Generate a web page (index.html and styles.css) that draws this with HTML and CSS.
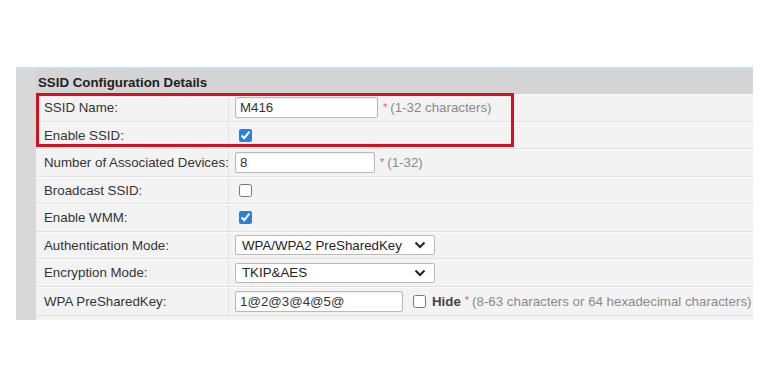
FILE: index.html
```html
<!DOCTYPE html>
<html lang="en">
<head>
  <meta charset="UTF-8" />
  <title>SSID Configuration Details</title>
  <link rel="stylesheet" href="styles.css">
</head>
<body>

<div class="panel">
  <div class="side"></div>
  <div class="content">
    <div class="title">SSID Configuration Details</div>
    <div class="rows">
      <div class="highlight"></div>
      <div class="row">
        <div class="label">SSID Name:</div>
        <div class="value">
          <input class="txt w-name" type="text" value="M416" />
          <span class="req">*</span> <span class="hint">(1-32 characters)</span>
        </div>
      </div>
      <div class="row">
        <div class="label">Enable SSID:</div>
        <div class="value"><input class="chk" type="checkbox" checked /></div>
      </div>
      <div class="row">
        <div class="label">Number of Associated Devices:</div>
        <div class="value">
          <input class="txt w-num" type="text" value="8" />
          <span class="req">*</span> <span class="hint">(1-32)</span>
        </div>
      </div>
      <div class="row">
        <div class="label">Broadcast SSID:</div>
        <div class="value"><input class="chk" type="checkbox" /></div>
      </div>
      <div class="row">
        <div class="label">Enable WMM:</div>
        <div class="value"><input class="chk" type="checkbox" checked /></div>
      </div>
      <div class="row">
        <div class="label">Authentication Mode:</div>
        <div class="value">
          <div class="sel">
            <span>WPA/WPA2 PreSharedKey</span>
            <svg width="12" height="8" viewBox="0 0 12 8"><path d="M1.5 1.5 L6 6 L10.5 1.5" fill="none" stroke="#222" stroke-width="2"/></svg>
          </div>
        </div>
      </div>
      <div class="row">
        <div class="label">Encryption Mode:</div>
        <div class="value">
          <div class="sel">
            <span>TKIP&amp;AES</span>
            <svg width="12" height="8" viewBox="0 0 12 8"><path d="M1.5 1.5 L6 6 L10.5 1.5" fill="none" stroke="#222" stroke-width="2"/></svg>
          </div>
        </div>
      </div>
      <div class="row last">
        <div class="label">WPA PreSharedKey:</div>
        <div class="value">
          <input class="txt w-key" type="text" value="1@2@3@4@5@" />
          <input class="chk hide-chk" type="checkbox" />
          <b class="hide">Hide</b>
          <span class="req">*</span> <span class="hint">(8-63 characters or 64 hexadecimal characters)</span>
        </div>
      </div>
    </div>
  </div>
</div>

</body>
</html>
```

FILE: styles.css
```css
body {
  margin: 0;
  background: #fff;
  font-family: 'Liberation Sans', Arial, sans-serif;
  font-size: 13.3px;
  color: #333;
}
.panel {
  margin: 67px 0 0 16px;
  width: 737px;
  display: flex;
  border-top: 2px solid #c9e1f6;
}
.side {
  width: 20px;
  background: #d8d8d8;
}
.content {
  flex: 1;
  background: #f3f3f3;
  padding-bottom: 4px;
  overflow: hidden;
}
.title {
  height: 25px;
  line-height: 27px;
  background: #d4d4d4;
  font-weight: bold;
  color: #222;
  padding-left: 2px;
}
.rows {
  position: relative;
}
.row {
  display: flex;
  border-bottom: 1px solid #e0e0e0;
  border-top: 1px solid #fbfbfb;
  box-sizing: border-box;
  height: 27.5px;
}
.row.last {
  height: 29px;
}
.label {
  width: 184px;
  flex-shrink: 0;
  padding-left: 8px;
  display: flex;
  align-items: center;
  border-right: 1px solid #e2e2e2;
  color: #333;
  white-space: nowrap;
}
.value {
  flex: 1;
  display: flex;
  align-items: center;
  padding-left: 6px;
  white-space: nowrap;
}
.txt {
  font-family: 'Liberation Sans', Arial, sans-serif;
  font-size: 13.3px;
  color: #333;
  height: 21px;
  box-sizing: border-box;
  border: 1px solid #b9b9b9;
  border-radius: 2px;
  box-shadow: inset 0 1px 2px rgba(0,0,0,0.08);
  padding: 0 4px;
  background: #fff;
  margin-right: 5px;
  flex-shrink: 0;
}
.w-name { width: 143px; }
.w-num { width: 140px; }
.w-key { width: 168px; margin-right: 10px; }
.chk {
  width: 13px;
  height: 13px;
  margin: 0 0 0 4px;
  accent-color: #2b7de0;
  flex-shrink: 0;
}
.hide-chk {
  margin: 0 6px 0 0;
}
.hide {
  color: #444;
  margin-right: 4px;
}
.req {
  color: #e8557a;
  font-size: 11px;
  margin-right: 3px;
  align-self: flex-start;
  margin-top: 6px;
}
.hint {
  color: #8a8a8a;
}
.sel {
  width: 200px;
  height: 20px;
  flex-shrink: 0;
  box-sizing: border-box;
  border: 1px solid #b9b9b9;
  border-radius: 2px;
  background: #fff;
  display: flex;
  align-items: center;
  justify-content: space-between;
  padding: 0 8px 0 6px;
  color: #222;
}
.highlight {
  position: absolute;
  left: 0;
  top: -1px;
  width: 478px;
  height: 54px;
  border: 3px solid #d4111f;
  box-sizing: border-box;
  z-index: 2;
  pointer-events: none;
}
```
